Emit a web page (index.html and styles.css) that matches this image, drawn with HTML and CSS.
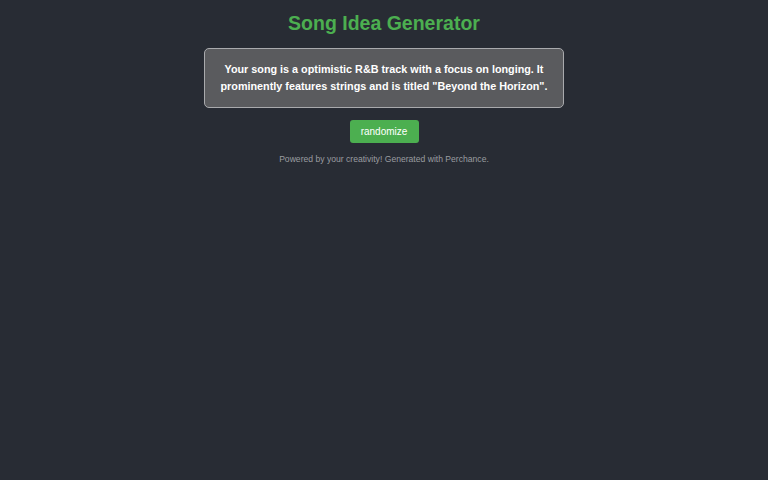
FILE: index.html
```html
<!DOCTYPE html>
<html>
<head>
<meta charset="utf-8">
<link rel="stylesheet" href="styles.css">
</head>
<body>
<main class="page">
  <h1 class="title">Song Idea Generator</h1>
  <div class="output">Your song is a optimistic R&amp;B track with a focus on longing. It prominently features strings and is titled "Beyond the Horizon".</div>
  <button class="btn">randomize</button>
  <p class="footer">Powered by your creativity! Generated with Perchance.</p>
</main>
</body>
</html>
```
FILE: styles.css
```css
html, body {
  margin: 0;
  padding: 0;
  background: #282c34;
  height: 100%;
}
body {
  font-family: "Liberation Sans", Arial, sans-serif;
  color: #fff;
}
.page {
  display: flex;
  flex-direction: column;
  align-items: center;
  padding-top: 12px;
}
.title {
  margin: 0;
  color: #4caf50;
  font-size: 19.5px;
  line-height: 23px;
  font-weight: bold;
}
.output {
  margin-top: 13px;
  box-sizing: border-box;
  width: 360px;
  padding: 12px 8px;
  background: #5a5b5e;
  border: 1px solid #a9aaad;
  border-radius: 5px;
  font-size: 10.8px;
  line-height: 17px;
  font-weight: bold;
  text-align: center;
  color: #fff;
}
.btn {
  margin-top: 12px;
  background: #4caf50;
  color: #fff;
  border: none;
  border-radius: 3px;
  font-family: "Liberation Sans", Arial, sans-serif;
  font-size: 10px;
  width: 69px;
  height: 23px;
  padding: 0;
}
.footer {
  margin: 10px 0 0;
  font-size: 8.6px;
  line-height: 12px;
  color: #9a9ca0;
}
```
